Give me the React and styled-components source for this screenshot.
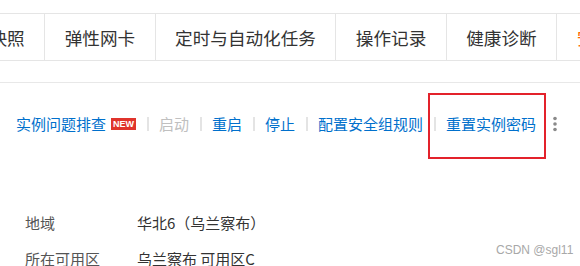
import React from 'react';
import styled, { createGlobalStyle } from 'styled-components';

const GlobalStyle = createGlobalStyle`
  html, body {
    margin: 0;
    padding: 0;
    background: #fff;
  }
  body {
    font-family: "Noto Sans CJK SC", "Noto Sans", sans-serif;
    overflow: hidden;
  }
`;

const Page = styled.div`
  position: relative;
  width: 580px;
  height: 266px;
  overflow: hidden;
`;

const Header = styled.div`
  padding: 13px 0 21px;
  border-bottom: 1px solid #e8e8e8;
`;

const TabStrip = styled.div`
  display: flex;
  margin-left: -30px;
  white-space: nowrap;
`;

const Tab = styled.div`
  box-sizing: border-box;
  flex: none;
  height: 48px;
  padding: 0 19.5px;
  display: flex;
  align-items: center;
  border-top: 1px solid #e5e5e5;
  border-bottom: 1px solid #e5e5e5;
  border-right: 1px solid #e5e5e5;
  font-size: 17.6px;
  color: ${({ active }) => (active ? '#ff6a00' : '#333')};
`;

const Actions = styled.div`
  display: flex;
  align-items: center;
  padding: 31px 0 0 16px;
  height: 20px;
  font-size: 15px;
  line-height: 20px;
`;

const Action = styled.span`
  color: ${({ disabled }) => (disabled ? '#c0c0c0' : '#0070cc')};
  cursor: ${({ disabled }) => (disabled ? 'default' : 'pointer')};
`;

const NewBadge = styled.span`
  display: inline-flex;
  align-items: center;
  justify-content: center;
  width: 25px;
  height: 12px;
  margin-left: 5px;
  background: #e0342c;
  color: #fff;
  font-family: "Liberation Sans", Arial, sans-serif;
  font-size: 9px;
  font-weight: bold;
  line-height: 12px;
`;

const Sep = styled.span`
  width: 2px;
  height: 14px;
  margin: 0 10px 0 11px;
  background: #e4e4e4;
`;

const More = styled.span`
  display: flex;
  margin-left: 16px;
`;

const Info = styled.div`
  display: grid;
  grid-template-columns: 112px auto;
  grid-auto-rows: 36px;
  align-items: center;
  margin-top: 70px;
  padding-left: 25px;
  font-size: 15px;
`;

const Label = styled.span`
  color: #555;
`;

const Value = styled.span`
  color: #333;
`;

const Highlight = styled.div`
  position: absolute;
  left: 428px;
  top: 93px;
  width: 118px;
  height: 66px;
  box-sizing: border-box;
  border: 2px solid #e3222b;
  pointer-events: none;
`;

const Watermark = styled.div`
  position: absolute;
  left: 496px;
  top: 243px;
  font-family: "Liberation Sans", Arial, sans-serif;
  font-size: 12px;
  color: #a8a8a8;
`;

const tabs = ['快照', '弹性网卡', '定时与自动化任务', '操作记录', '健康诊断', '安全组'];

const actions = [
  { label: '启动', disabled: true },
  { label: '重启' },
  { label: '停止' },
  { label: '配置安全组规则' },
  { label: '重置实例密码' },
];

const DotsIcon = () => (
  <svg width="6" height="16" viewBox="0 0 6 16">
    <circle cx="3" cy="2.5" r="1.8" fill="#8a8a8a" />
    <circle cx="3" cy="8" r="1.8" fill="#8a8a8a" />
    <circle cx="3" cy="13.5" r="1.8" fill="#8a8a8a" />
  </svg>
);

const App = () => (
  <Page>
    <GlobalStyle />
    <Header>
      <TabStrip>
        {tabs.map((t, i) => (
          <Tab key={t} active={i === tabs.length - 1}>
            {t}
          </Tab>
        ))}
      </TabStrip>
    </Header>
    <Actions>
      <Action>实例问题排查</Action>
      <NewBadge>NEW</NewBadge>
      {actions.map((a) => (
        <React.Fragment key={a.label}>
          <Sep />
          <Action disabled={a.disabled}>{a.label}</Action>
        </React.Fragment>
      ))}
      <More>
        <DotsIcon />
      </More>
    </Actions>
    <Info>
      <Label>地域</Label>
      <Value>华北6（乌兰察布）</Value>
      <Label>所在可用区</Label>
      <Value>乌兰察布 可用区C</Value>
    </Info>
    <Highlight />
    <Watermark>CSDN @sgl11</Watermark>
  </Page>
);

export default App;
